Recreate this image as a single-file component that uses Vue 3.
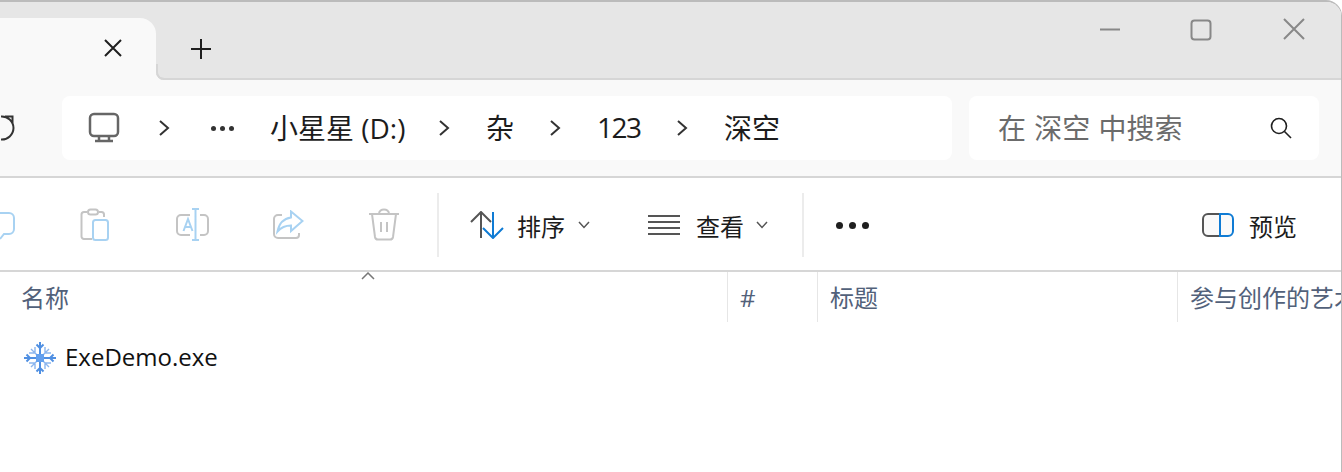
<script setup>
const crumbs = [
  { label: '小星星 (D:)', width: 133 },
  { label: '杂', width: 28 },
  { label: '123', width: 44, tight: true },
  { label: '深空', width: 56, last: true },
]
const columns = [
  { label: '名称', width: 728, cls: 'col-name' },
  { label: '#', width: 90, cls: '' },
  { label: '标题', width: 360, cls: '' },
  { label: '参与创作的艺术家', width: 164, cls: '' },
]
</script>

<template>
  <div class="window">
    <header class="titlebar">
      <div class="tab">
        <svg class="tab-close" width="20" height="20" viewBox="0 0 20 20"><path d="M2 2 18 18M18 2 2 18" /></svg>
      </div>
      <div class="tab-rest">
        <svg class="tab-add" width="22" height="22" viewBox="0 0 22 22"><path d="M11 1v20M1 11h20" /></svg>
        <div class="win-controls">
          <svg width="22" height="22" viewBox="0 0 22 22"><path d="M1 11.500h20" /></svg>
          <svg class="win-max" width="22" height="22" viewBox="0 0 22 22"><rect x="1.500" y="1.500" width="19" height="19" rx="3" /></svg>
          <svg width="22" height="22" viewBox="0 0 22 22"><path d="M1 1 21 21M21 1 1 21" /></svg>
        </div>
      </div>
    </header>

    <nav class="navbar">
      <div class="refresh">
        <svg width="28" height="28" viewBox="0 0 28 28"><path d="M1 2.500A11.750 11.750 0 0 1 13.500 14 11.750 11.750 0 0 1 1 25.500M5 2.500h7.500V10" /></svg>
      </div>
      <div class="address">
        <svg class="pc-icon" width="32" height="32" viewBox="0 0 32 32">
          <rect x="2" y="2" width="28" height="22" rx="4" />
          <path d="M11 24v4M21 24v4M7 29h18" />
        </svg>
        <svg class="chev first" width="12" height="18" viewBox="0 0 12 18"><path d="M2 2 10 9 2 16" /></svg>
        <span class="ellipsis"><i></i><i></i><i></i></span>
        <div v-for="c in crumbs" :key="c.label" class="crumb">
          <span class="crumb-label" :class="{ tight: c.tight }" :style="{ width: `${c.width}px` }">{{ c.label }}</span>
          <svg v-if="!c.last" class="chev" width="12" height="18" viewBox="0 0 12 18"><path d="M2 2 10 9 2 16" /></svg>
        </div>
      </div>
      <div class="search">
        <span>在 深空 中搜索</span>
        <svg width="22" height="22" viewBox="0 0 22 22"><circle cx="9" cy="9" r="7.500" /><path d="M14.500 14.500 21 21" /></svg>
      </div>
    </nav>

    <section class="toolbar">
      <div class="tool tool-clip">
        <svg width="32" height="32" viewBox="0 0 32 32"><path class="bl" d="M16 4h10a5 5 0 0 1 5 5v11a5 5 0 0 1-5 5H21l-4 5" /></svg>
      </div>
      <div class="tool">
        <svg width="32" height="34" viewBox="0 0 32 34">
          <path class="gr" d="M7 4H4a2.500 2.500 0 0 0-2.500 2.500v22A2.500 2.500 0 0 0 4 31h8M24 9V6.500A2.500 2.500 0 0 0 21.500 4H19" />
          <rect class="gr" x="8" y="1.500" width="10" height="5" rx="2.500" />
          <rect class="bl" x="13" y="12" width="15" height="20" rx="2.500" />
        </svg>
      </div>
      <div class="tool">
        <svg width="34" height="34" viewBox="0 0 34 34">
          <path class="gr" d="M15 7H6a4 4 0 0 0-4 4v12a4 4 0 0 0 4 4h9M25 7h4a4 4 0 0 1 4 4v12a4 4 0 0 1-4 4h-4" />
          <path class="bl" d="M17 1h7M20.500 1v31M17 32h7M8.500 23 13 11l4.500 12M10 19h6" />
        </svg>
      </div>
      <div class="tool">
        <svg width="32" height="30" viewBox="0 0 32 30">
          <path class="gr" d="M10 5H6a4 4 0 0 0-4 4v15a4 4 0 0 0 4 4h18a3 3 0 0 0 3-3v-2" />
          <path class="bl" d="M19 1.500 30.500 11 19 21v-5.500c-6 0-10 2-13.500 6C7 13.500 12 8.500 19 7.500z" />
        </svg>
      </div>
      <div class="tool">
        <svg width="32" height="34" viewBox="0 0 32 34">
          <path class="gr" d="M1 6h30M4 6l3 23a3 3 0 0 0 3 2.500h12a3 3 0 0 0 3-2.500l3-23M11 6c0-6 10-6 10 0M13 14v10M19 14v10" />
        </svg>
      </div>
      <div class="tool-sep"></div>
      <div class="menu menu-sort">
        <svg width="34" height="28" viewBox="0 0 34 28">
          <path class="dk" d="M11 27V2M1 11 11 1l10 10" />
          <path class="ac" d="M23 1v25M13 17l10 10 10-10" />
        </svg>
        <span class="menu-label">排序</span>
        <svg class="caret" width="12" height="8" viewBox="0 0 12 8"><path d="M1 1 6 6.500 11 1" /></svg>
      </div>
      <div class="menu menu-view">
        <svg width="32" height="22" viewBox="0 0 32 22"><path class="dk" d="M0 2h32M0 8h32M0 14h32M0 20h32" /></svg>
        <span class="menu-label">查看</span>
        <svg class="caret" width="12" height="8" viewBox="0 0 12 8"><path d="M1 1 6 6.500 11 1" /></svg>
      </div>
      <div class="tool-sep sep-right"></div>
      <div class="more"><i></i><i></i><i></i></div>
      <div class="preview">
        <svg width="32" height="24" viewBox="0 0 32 24">
          <path class="dk" fill="#fafafa" d="M18 1H6a5 5 0 0 0-5 5v12a5 5 0 0 0 5 5h12" />
          <path class="ac" fill="#fafafa" d="M18 1v22h8a5 5 0 0 0 5-5V6a5 5 0 0 0-5-5z" />
        </svg>
        <span class="menu-label">预览</span>
      </div>
    </section>

    <div class="columns">
      <div
        v-for="col in columns" :key="col.label" class="col" :class="col.cls"
        :style="{ flexBasis: `${col.width}px` }"
      >
        {{ col.label }}
      </div>
      <svg class="sort-mark" width="14" height="8" viewBox="0 0 14 8"><path d="M1 7 7 1l6 6" /></svg>
    </div>

    <div class="row">
      <svg class="snow" width="32" height="32" viewBox="0 0 32 32">
        <path class="snow-thin" d="M7 7l18 18M25 7 7 25M5 11h6V5M27 11h-6V5M5 21h6v6M27 21h-6v6" />
        <path d="M16 0v32M0 16h32M12.500 2.500l3.500 3.500 3.500-3.500M12.500 29.500l3.500-3.500 3.500 3.500M2.500 12.500l3.500 3.500-3.500 3.500M29.500 12.500l-3.500 3.500 3.500 3.500" />
        <rect x="12" y="12" width="8" height="8" />
      </svg>
      <span>ExeDemo.exe</span>
    </div>
  </div>
</template>

<style scoped>
.window {
  width: 1342px;
  height: 472px;
  box-sizing: border-box;
  overflow: hidden;
  background: #fff;
  border-top: 2px solid #bbb;
  border-right: 1px solid #bbb;
  border-top-right-radius: 16px;
  font-family: "Open Sans", "Noto Sans CJK SC", sans-serif;
  color: #1c1c1c;
}
svg {
  flex: none;
  fill: none;
  stroke-width: 2;
}

.titlebar {
  display: flex;
  height: 78px;
  background: linear-gradient(#e6e6e6 60px, #f9f9f9 60px);
}
.tab {
  display: flex;
  justify-content: flex-end;
  width: 156px;
  height: 62px;
  margin-top: 16px;
  background: #f9f9f9;
  border-top-right-radius: 16px;
}
.tab-close {
  margin: 20px 33px 0 0;
  stroke: #1f1f1f;
}
.tab-rest {
  position: relative;
  flex: 1;
  display: flex;
  align-items: flex-start;
  background: #e6e6e6;
  border-bottom: 2px solid #d6d6d6;
  border-bottom-left-radius: 8px;
}
.tab-rest::before {
  content: "";
  position: absolute;
  left: 0;
  bottom: -2px;
  width: 10px;
  height: 14px;
  border-left: 2px solid #d6d6d6;
  border-bottom: 2px solid #d6d6d6;
  border-bottom-left-radius: 8px;
}
.tab-add {
  margin: 36px 0 0 34px;
  stroke: #1f1f1f;
}
.win-controls {
  display: flex;
  gap: 70px;
  margin: 16px 0 0 auto;
  padding-right: 36px;
}
.win-controls svg {
  stroke: #888;
}
.win-controls .win-max {
  margin: 1px 1px 0 -1px;
}

.navbar {
  display: flex;
  align-items: flex-start;
  height: 96px;
  background: #f9f9f9;
  padding-top: 16px;
  box-sizing: border-box;
}
.refresh {
  width: 62px;
  flex: none;
  padding-top: 18px;
}
.refresh svg {
  stroke: #333;
}
.address {
  display: flex;
  align-items: center;
  width: 890px;
  height: 64px;
  background: #fff;
  border-radius: 8px;
  font-size: 28px;
  padding-left: 26px;
  box-sizing: border-box;
}
.pc-icon {
  stroke: #666;
  stroke-width: 2.500;
}
.chev {
  stroke: #333;
  stroke-width: 2;
}
.chev.first {
  margin-left: 38px;
}
.ellipsis {
  display: flex;
  gap: 4px;
  margin: 0 36px 0 41px;
}
.ellipsis i {
  width: 5px;
  height: 5px;
  border-radius: 50%;
  background: #333;
}
.crumb {
  display: flex;
  align-items: center;
}
.crumb-label {
  display: block;
  white-space: nowrap;
  padding-bottom: 2px;
}
.crumb-label.tight {
  letter-spacing: -1.500px;
}
.crumb .chev {
  margin: 0 36px 0 35px;
}
.search {
  display: flex;
  align-items: center;
  justify-content: space-between;
  width: 350px;
  height: 64px;
  margin-left: 17px;
  padding: 0 27px 0 29px;
  box-sizing: border-box;
  background: #fff;
  border-radius: 8px;
  font-size: 28px;
  word-spacing: 1px;
  color: #6b6b6b;
}
.search span {
  padding-bottom: 2px;
}
.search svg {
  stroke: #1f1f1f;
  stroke-width: 1.600;
}

.toolbar {
  display: flex;
  align-items: center;
  height: 90px;
  padding-top: 2px;
  border-top: 2px solid #d6d6d6;
  border-bottom: 2px solid #d6d6d6;
}
.tool {
  flex: none;
  display: flex;
  justify-content: center;
  width: 96px;
}
.tool-clip {
  width: 48px;
  justify-content: flex-end;
}
.tool-clip svg {
  margin-right: 33px;
}
.tool .gr {
  stroke: #c4c4c4;
}
.tool .bl {
  stroke: #a8d2f2;
}
.tool-sep {
  width: 2px;
  height: 64px;
  background: #ececec;
  flex: none;
  margin-left: 5px;
}
.tool-sep.sep-right {
  margin-left: 34px;
}
.dk {
  stroke: #555;
}
.ac {
  stroke: #0f7bd4;
}
.menu {
  display: flex;
  align-items: center;
}
.menu-sort {
  margin-left: 31px;
}
.menu-sort .menu-label {
  margin-left: 13px;
}
.menu-view {
  margin-left: 58px;
}
.menu-view .menu-label {
  margin-left: 16px;
}
.menu-label {
  font-size: 24px;
  margin-left: 15px;
  color: #1c1c1c;
}
.caret {
  stroke: #555;
  margin-left: 13px;
  stroke-width: 1.500;
}
.menu-view .caret {
  margin-left: 12px;
}
.more {
  display: flex;
  gap: 6px;
  margin-left: 32px;
}
.more i {
  width: 7px;
  height: 7px;
  border-radius: 50%;
  background: #1f1f1f;
}
.preview {
  display: flex;
  align-items: center;
  margin-left: auto;
  margin-right: 44px;
}

.columns {
  position: relative;
  display: flex;
  height: 50px;
}
.col {
  flex: none;
  box-sizing: border-box;
  padding: 10px 0 0 12px;
  font-size: 24px;
  line-height: 32px;
  color: #52617a;
  white-space: nowrap;
  overflow: hidden;
  border-right: 1px solid #e6e6e6;
}
.col-name {
  padding-left: 21px;
}
.sort-mark {
  position: absolute;
  left: 361px;
  top: 0;
  stroke: #777;
  stroke-width: 1.500;
}

.row {
  display: flex;
  align-items: center;
  gap: 9px;
  padding: 18px 0 0 24px;
  font-size: 24px;
  color: #111;
}
.row span {
  padding-bottom: 2px;
}
.snow {
  stroke: #4f8fe2;
}
.snow .snow-thin {
  stroke: #8cb6ee;
  stroke-width: 1.400;
}
.snow rect {
  fill: #63a0ee;
  stroke: none;
}
</style>
